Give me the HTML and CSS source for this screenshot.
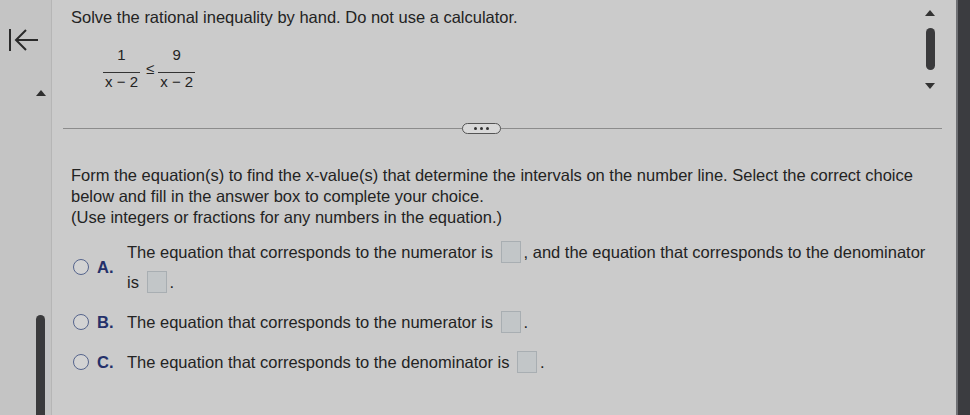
FILE: index.html
```html
<!DOCTYPE html>
<html>
<head>
<meta charset="utf-8">
<link rel="stylesheet" href="styles.css">
</head>
<body>
<div class="screen">
  <aside class="sidebar">
    <svg class="back" width="32" height="24" viewBox="0 0 32 24">
      <line x1="2" y1="1" x2="2" y2="23" stroke="#2a2a2a" stroke-width="2"/>
      <polyline points="18,2 8,12 18,22" fill="none" stroke="#2a2a2a" stroke-width="2"/>
      <line x1="8" y1="12" x2="30" y2="12" stroke="#2a2a2a" stroke-width="2"/>
    </svg>
    <div class="tri-up"></div>
    <div class="side-thumb"></div>
  </aside>
  <main class="main">
    <p class="title">Solve the rational inequality by hand. Do not use a calculator.</p>
    <div class="ineq">
      <span class="frac"><span class="num">1</span><span class="den">x − 2</span></span>
      <span class="rel">≤</span>
      <span class="frac"><span class="num">9</span><span class="den">x − 2</span></span>
    </div>
    <div class="divider"><span class="pill"><i></i><i></i><i></i></span></div>
    <p class="prompt">Form the equation(s) to find the x-value(s) that determine the intervals on the number line. Select the correct choice<br>below and fill in the answer box to complete your choice.<br>(Use integers or fractions for any numbers in the equation.)</p>
    <div class="options">
      <div class="option">
        <span class="radio"></span><span class="letter">A.</span>
        <span class="otext">The equation that corresponds to the numerator is <span class="box"></span>, and the equation that corresponds to the denominator<br>is <span class="box"></span>.</span>
      </div>
      <div class="option">
        <span class="radio"></span><span class="letter">B.</span>
        <span class="otext">The equation that corresponds to the numerator is <span class="box"></span>.</span>
      </div>
      <div class="option">
        <span class="radio"></span><span class="letter">C.</span>
        <span class="otext">The equation that corresponds to the denominator is <span class="box"></span>.</span>
      </div>
    </div>
    <div class="scroll">
      <div class="s-up"></div>
      <div class="s-thumb"></div>
      <div class="s-down"></div>
    </div>
  </main>
  <div class="edge"></div>
</div>
</body>
</html>
```
FILE: styles.css
```css
html, body {
  margin: 0;
  padding: 0;
}
body {
  font-family: "Liberation Sans", Arial, sans-serif;
  color: #232323;
  background: #c9c9c9;
}
.screen {
  display: flex;
  width: 970px;
  height: 415px;
  overflow: hidden;
}
.sidebar {
  position: relative;
  width: 52px;
  flex: none;
  background: #c4c4c4;
  border-right: 1px solid #b6b6b6;
  box-sizing: border-box;
}
.back {
  position: absolute;
  left: 8px;
  top: 28px;
}
.tri-up {
  position: absolute;
  left: 36px;
  top: 90px;
  width: 0;
  height: 0;
  border-left: 5px solid transparent;
  border-right: 5px solid transparent;
  border-bottom: 6px solid #2e2e2e;
}
.side-thumb {
  position: absolute;
  left: 36px;
  top: 315px;
  width: 9px;
  height: 110px;
  border-radius: 5px;
  background: #3a3a3c;
}
.main {
  position: relative;
  flex: 1;
  background: #cbcbcb;
  padding-left: 19px;
  box-sizing: border-box;
}
.edge {
  width: 12px;
  flex: none;
  background: #3b3c40;
  border-left: 2px solid #6f7074;
}
.title {
  margin: 8px 0 0;
  font-size: 16.5px;
  line-height: 19px;
}
.ineq {
  display: flex;
  align-items: center;
  margin: 19px 0 0 32px;
  font-size: 15px;
}
.frac {
  display: inline-flex;
  flex-direction: column;
  align-items: center;
  width: 37px;
}
.num {
  line-height: 18px;
  padding-bottom: 8px;
  border-bottom: 1px solid #333;
  width: 100%;
  text-align: center;
}
.den {
  line-height: 18px;
}
.rel {
  margin: 0 4px 0 6px;
  font-size: 15px;
  position: relative;
  top: 0px;
}
.divider {
  position: relative;
  margin: 37px 14px 0 -8px;
  border-top: 1px solid #8c8c8c;
  height: 0;
}
.pill {
  position: absolute;
  left: 399px;
  top: -6px;
  width: 37px;
  height: 9px;
  border: 1.5px solid #555;
  border-radius: 6px;
  background: #d9d9d9;
  display: flex;
  justify-content: center;
  align-items: center;
  gap: 3px;
}
.pill i {
  width: 3px;
  height: 3px;
  border-radius: 50%;
  background: #333;
}
.prompt {
  margin: 36px 0 0;
  font-size: 16.5px;
  line-height: 21px;
}
.options {
  margin-top: 9px;
  display: flex;
  flex-direction: column;
  gap: 10px;
}
.option {
  display: flex;
  align-items: center;
  font-size: 16.5px;
  line-height: 30px;
}
.radio {
  width: 14px;
  height: 14px;
  border: 1.5px solid #55648c;
  border-radius: 50%;
  background: #d3d3d3;
  margin-left: 2px;
  flex: none;
}
.letter {
  width: 30px;
  margin-left: 8px;
  font-weight: bold;
  color: #24306a;
  flex: none;
}
.otext {
  flex: 1;
}
.box {
  display: inline-block;
  width: 18px;
  height: 20px;
  vertical-align: middle;
  background: #c2c6c8;
  border: 1px solid #a8aeb2;
  margin: -4px 3px 0 3px;
}
.scroll {
  position: absolute;
  right: 21px;
  top: 10px;
  width: 10px;
  display: flex;
  flex-direction: column;
  align-items: center;
}
.s-up {
  width: 0;
  height: 0;
  border-left: 5px solid transparent;
  border-right: 5px solid transparent;
  border-bottom: 6px solid #333;
}
.s-thumb {
  margin-top: 12px;
  width: 9px;
  height: 42px;
  border-radius: 5px;
  background: #3a3a3c;
}
.s-down {
  margin-top: 13px;
  width: 0;
  height: 0;
  border-left: 5px solid transparent;
  border-right: 5px solid transparent;
  border-top: 6px solid #333;
}
```
